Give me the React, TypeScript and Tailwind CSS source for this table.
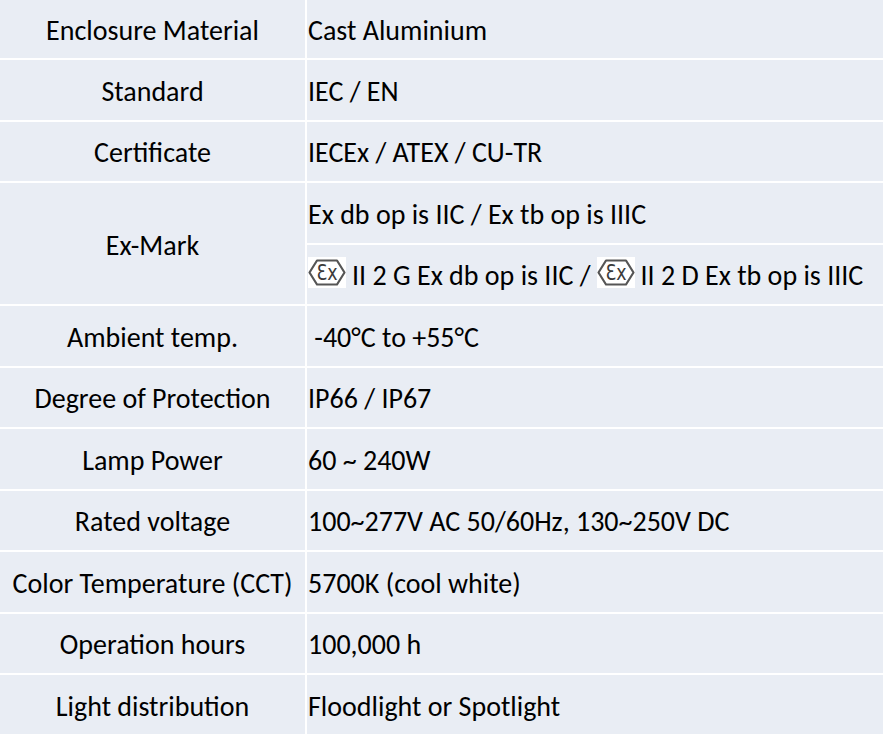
import React from 'react';

const ExMark: React.FC = () => (
  <svg width="38" height="31" viewBox="0 0 38 31" className="mb-[7px] inline-block shrink-0">
    <rect width="38" height="31" fill="#ffffff" />
    <polygon
      points="1.5,15.5 9,3.5 29,3.5 36.5,15.5 29,27.5 9,27.5"
      fill="none"
      stroke="#555555"
      strokeWidth="2.2"
      strokeLinejoin="round"
    />
    <text
      x="19"
      y="23"
      textAnchor="middle"
      fontFamily="'DejaVu Sans', sans-serif"
      fontSize="21"
      fill="#3a3a3a"
      textLength="21"
      lengthAdjust="spacingAndGlyphs"
    >
      Ɛx
    </text>
  </svg>
);

const rows: [string, string][] = [
  ['Enclosure Material', 'Cast Aluminium'],
  ['Standard', 'IEC / EN'],
  ['Certificate', 'IECEx / ATEX / CU-TR'],
];

const rowsAfter: [string, string][] = [
  ['Ambient temp.', '\u00a0-40°C to +55°C'],
  ['Degree of Protection', 'IP66 / IP67'],
  ['Lamp Power', '60 ~ 240W'],
  ['Rated voltage', '100~277V AC 50/60Hz, 130~250V DC'],
  ['Color Temperature (CCT)', '5700K (cool white)'],
  ['Operation hours', '100,000 h'],
  ['Light distribution', 'Floodlight or Spotlight'],
];

const labelCls = 'flex items-center justify-center bg-[#e9edf4] pt-[4px] text-center whitespace-nowrap';
const valueCls = 'flex items-center bg-[#e9edf4] pl-[1px] pt-[4px] whitespace-nowrap';

const App: React.FC = () => {
  return (
    <div
      className="grid h-[734px] w-[883px] grid-cols-[305px_1fr] grid-rows-[58px_repeat(11,59.5px)] gap-[2px] overflow-hidden bg-white text-[28px] text-black"
      style={{ fontFamily: "Carlito, Calibri, 'Open Sans', sans-serif" }}
    >
      {rows.map(([label, value]) => (
        <React.Fragment key={label}>
          <div className={labelCls}>{label}</div>
          <div className={valueCls}>{value}</div>
        </React.Fragment>
      ))}

      <div className={`${labelCls} row-span-2`}>Ex-Mark</div>
      <div className={valueCls}>Ex db op is IIC / Ex tb op is IIIC</div>
      <div className={`${valueCls} gap-[6px] whitespace-pre`}>
        <ExMark />
        <span>II 2 G Ex db op is IIC /</span>
        <ExMark />
        <span>II 2 D Ex tb op is IIIC</span>
      </div>

      {rowsAfter.map(([label, value]) => (
        <React.Fragment key={label}>
          <div className={labelCls}>{label}</div>
          <div className={valueCls}>{value}</div>
        </React.Fragment>
      ))}
    </div>
  );
};

export default App;
